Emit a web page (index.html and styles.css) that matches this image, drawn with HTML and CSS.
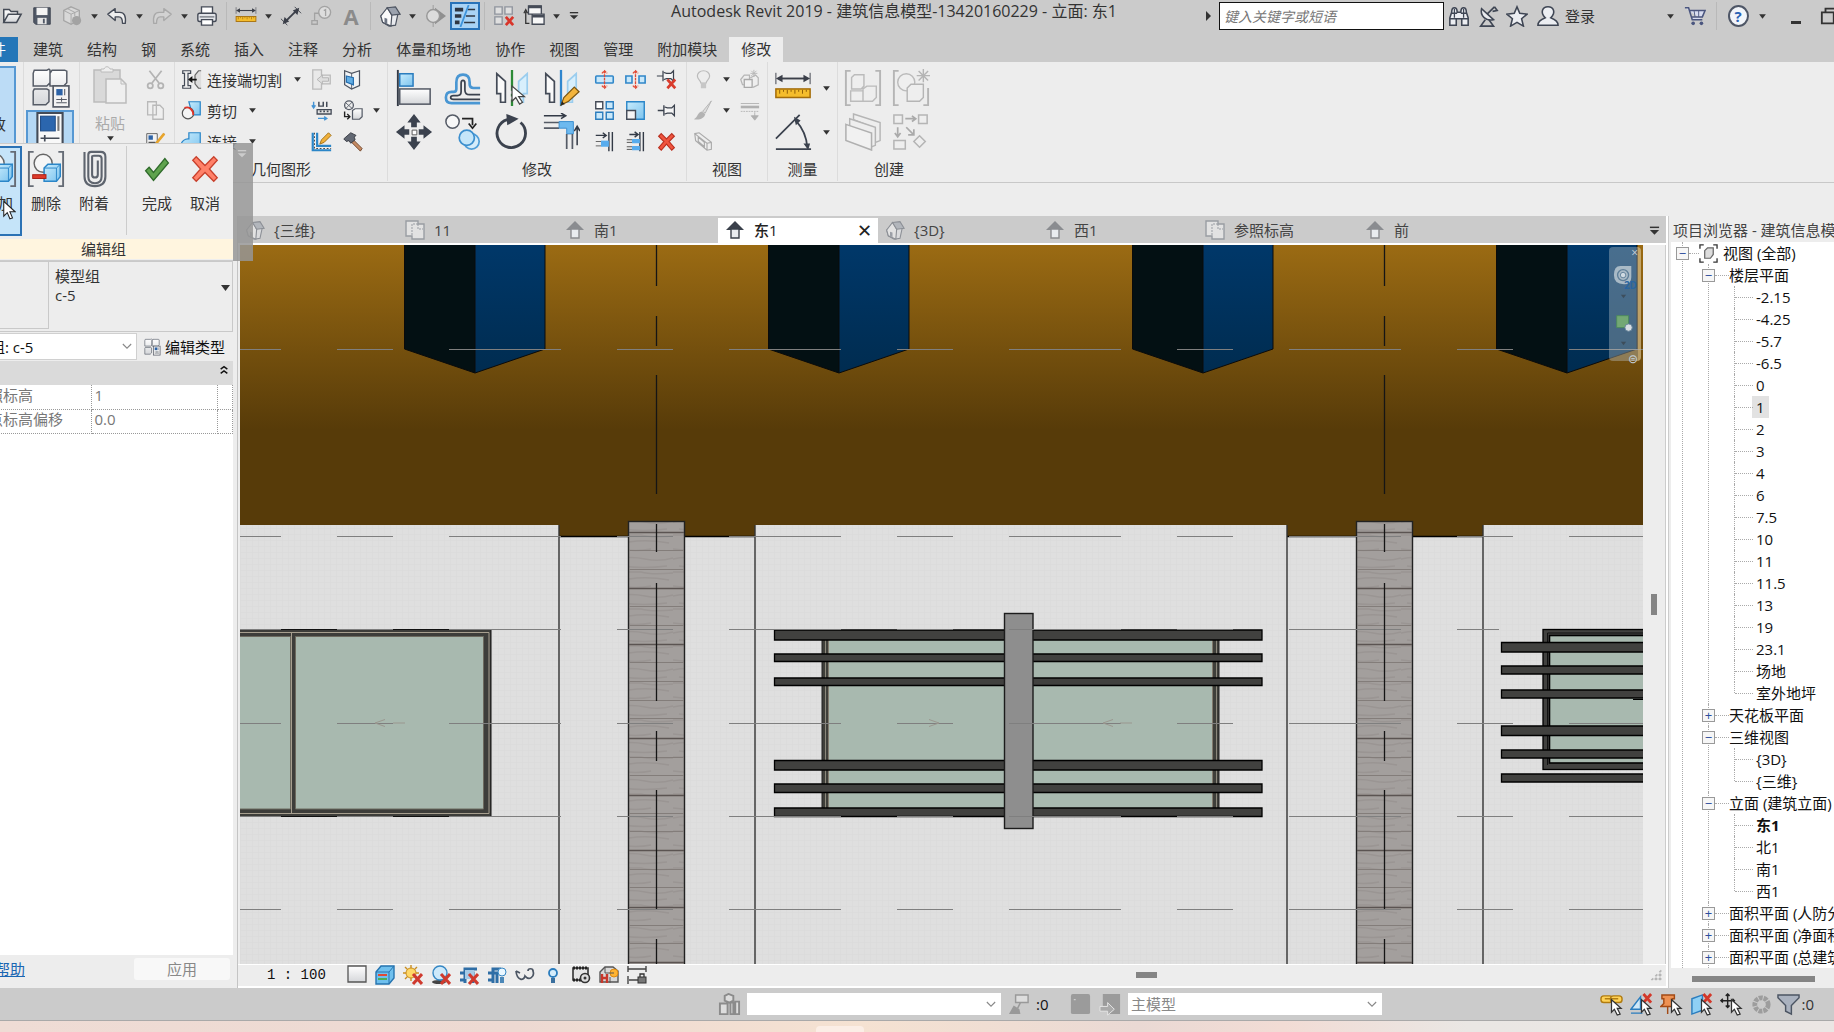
FILE: index.html
```html
<!DOCTYPE html>
<html lang="zh-CN">
<head>
<meta charset="utf-8">
<title>Autodesk Revit 2019</title>
<link rel="stylesheet" href="styles.css">
</head>
<body>
<svg class="sprite" aria-hidden="true">
  <defs>
    <linearGradient id="gBox" x1="0" y1="0" x2="0" y2="1"><stop offset="0" stop-color="#fff"/><stop offset="1" stop-color="#d5d7da"/></linearGradient>
    <linearGradient id="gBlue" x1="0" y1="0" x2="1" y2="1"><stop offset="0" stop-color="#c8ecfd"/><stop offset="1" stop-color="#7cc3ee"/></linearGradient>
  </defs>
  <symbol id="caret" viewBox="0 0 8 8"><path d="M1 2h6L4 6z" fill="#333"/></symbol>
  <symbol id="caret-right" viewBox="0 0 8 12"><path d="M1 1v10l5-5z" fill="#333"/></symbol>
  <symbol id="chev" viewBox="0 0 12 8"><path d="M1 1l5 5 5-5" fill="none" stroke="#888" stroke-width="1.3"/></symbol>
  <symbol id="fold" viewBox="0 0 10 12"><path d="M1 5l4-3 4 3M1 10l4-3 4 3" fill="none" stroke="#111" stroke-width="1.700"/></symbol>
  <symbol id="menu-caret" viewBox="0 0 12 12"><path d="M1 2h10" stroke="#333" stroke-width="1.6"/><path d="M1 5h10l-5 5z" fill="#333"/></symbol>
  <symbol id="open" viewBox="0 0 24 24"><path d="M3 19V5h6l2 2h7v3M3 19L8 10h14l-5 9z" fill="url(#gBox)" stroke="#444a55" stroke-width="1.6"/></symbol>
  <symbol id="save" viewBox="0 0 24 24"><path d="M3 3h18v18H5l-2-2z" fill="#505866" stroke="#3c434f"/><path d="M6 3h12v8H6z" fill="#f4f4f4"/><path d="M7 14h10v7H7z" fill="#e5e5e5"/><path d="M13 15h2v5h-2z" fill="#505866"/></symbol>
  <symbol id="sync" viewBox="0 0 24 24"><path d="M11 2l9 4v10l-9 5-8-4V6z" fill="#d8d8d8" stroke="#a5a5a5" stroke-width="1.4"/><path d="M3 6l8 4 9-4M11 10v11M7 4l8 4v4" fill="none" stroke="#a5a5a5"/><circle cx="17" cy="17" r="5" fill="#a3a3a3"/></symbol>
  <symbol id="undo" viewBox="0 0 24 24"><path d="M2 10l8-6v4h5c5 0 7 4 6 12h-3c0-5-1-7-4-7h-4v4z" fill="#eee" stroke="#454b57" stroke-width="1.5" stroke-linejoin="round"/></symbol>
  <symbol id="redo" viewBox="0 0 24 24"><path d="M22 10l-8-6v4H9c-5 0-7 4-6 12h3c0-5 1-7 4-7h4v4z" fill="#d2d2d2" stroke="#a9a9a9" stroke-width="1.5" stroke-linejoin="round"/></symbol>
  <symbol id="print" viewBox="0 0 24 24"><path d="M6 9V2h12v7" fill="#fff" stroke="#454b57" stroke-width="1.5"/><rect x="2" y="9" width="20" height="9" rx="2" fill="#e2e4e8" stroke="#454b57" stroke-width="1.5"/><path d="M6 16h12v6H6z" fill="#fff" stroke="#454b57" stroke-width="1.5"/><path d="M4 13h16" stroke="#454b57"/></symbol>
  <symbol id="measure" viewBox="0 0 40 40"><path d="M5 10h30" stroke="#3b3f49" stroke-width="2"/><path d="M2 10l7-4v8zM38 10l-7-4v8z" fill="#3b3f49"/><path d="M2 4v12M38 4v12" stroke="#3b3f49"/><rect x="2" y="21" width="36" height="9" fill="#f5bd2c" stroke="#a46d0a" stroke-width="1.6"/><path d="M6 22v4M10 22v2M14 22v4M18 22v2M22 22v4M26 22v2M30 22v4M34 22v2" stroke="#8a5b06"/></symbol>
  <symbol id="dim" viewBox="0 0 24 24"><path d="M5 19L19 5" stroke="#3b3f49" stroke-width="2"/><path d="M3 21l2-8 5 5zM21 3l-2 8-5-5z" fill="#3b3f49"/><path d="M1 15l7 7M16 2l7 7" stroke="#3b3f49"/></symbol>
  <symbol id="tag" viewBox="0 0 24 24"><circle cx="16" cy="8" r="6.500" fill="#ddd" stroke="#a3a3a3" stroke-width="1.5"/><path d="M15 6l2-1v7M10 9H5v8M2 17h6v4H2z" fill="none" stroke="#a3a3a3" stroke-width="1.4"/></symbol>
  <symbol id="home" viewBox="0 0 24 24"><path d="M2 12l7-8 12 4-3 14-7 1-7-4z" fill="#e9ebef" stroke="#4d5461" stroke-width="1.3"/><path d="M2 12l7-9 5 8-1 12-9-4z" fill="#fafafa" stroke="#4d5461" stroke-width="1.3"/><path d="M9 3l9-1 5 8-9 1z" fill="#9ba2ae" stroke="#4d5461" stroke-width="1.3"/><path d="M6 14l3 1v6l-3-2z" fill="#6d7583"/></symbol>
  <symbol id="section" viewBox="0 0 24 24"><path d="M12 3l12 9-12 9z" fill="#8f8f8f"/><circle cx="10" cy="12" r="7" fill="#dcdcdc" stroke="#999" stroke-width="1.600"/><path d="M10 0v5M10 19v5" stroke="#999"/></symbol>
  <symbol id="thin" viewBox="0 0 24 24"><path d="M1 3h9v4H1zM1 10h7v4H1zM1 17h5v4H1z" fill="#2f3642"/><path d="M15 5h8M13 12h10M11 19h12" stroke="#2f3642" stroke-width="1.6"/><path d="M16 0L7 24" stroke="#3e94dc" stroke-width="2"/></symbol>
  <symbol id="closehid" viewBox="0 0 24 24"><path d="M2 2h8v8H2zM13 2h8v8h-8zM2 13h8v8H2z" fill="#dfdfdf" stroke="#8f949d" stroke-width="1.5"/><path d="M14 13l8 9M22 13l-8 9" stroke="#d8352a" stroke-width="3"/></symbol>
  <symbol id="switch" viewBox="0 0 24 24"><path d="M6 1h14v9H6zM10 10h13v11H10z" fill="#f7f7f7" stroke="#454b57" stroke-width="1.5"/><path d="M6 2h14M10 12h13" stroke="#454b57" stroke-width="3"/><path d="M3 7v13h4M1 9l2-4 2 4" fill="none" stroke="#333" stroke-width="1.4"/></symbol>
  <symbol id="binoc" viewBox="0 0 24 24"><path d="M4 8q0-5 3-5t3 5h4q0-5 3-5t3 5l2 6v8h-7v-7h-6v7H2v-8z" fill="#eceef2" stroke="#3f4654" stroke-width="1.700"/><path d="M4 9h6M14 9h6M2 15h7M15 15h7M7 4v10M17 4v10" stroke="#3f4654" stroke-width="1.400"/></symbol>
  <symbol id="dish" viewBox="0 0 24 24"><path d="M5 4c-2 8 5 14 13 12z" fill="#e9ebef" stroke="#3f4654" stroke-width="1.700"/><path d="M11 10l8-8M19 2l3 4-5 1M9 16l-5 7h14l-5-7" fill="none" stroke="#3f4654" stroke-width="1.8"/></symbol>
  <symbol id="star" viewBox="0 0 24 24"><path d="M12 2l3 7 8 1-6 5 2 8-7-4-7 4 2-8-6-5 8-1z" fill="#eceef2" stroke="#3f4654" stroke-width="1.7"/></symbol>
  <symbol id="user" viewBox="0 0 24 24"><path d="M9 14c-6-6-3-12 3-12s9 6 3 12c5 2 8 4 8 8H1c0-4 3-6 8-8z" fill="#eceef2" stroke="#3f4654" stroke-width="1.7"/></symbol>
  <symbol id="cart" viewBox="0 0 24 24"><path d="M1 3h4l4 13h11M6 6h17l-3 7H8" fill="#d7dcf0" stroke="#4b567f" stroke-width="1.700"/><path d="M11 6l1 7M16 6v7" stroke="#4b567f"/><circle cx="10" cy="20" r="2" fill="#4b567f"/><circle cx="19" cy="20" r="2" fill="#4b567f"/></symbol>
  <symbol id="restore" viewBox="0 0 24 24"><path d="M2 8h13v12H2z" fill="none" stroke="#333" stroke-width="2"/><path d="M6 8V4h13v12h-4" fill="none" stroke="#333" stroke-width="2"/></symbol>

  <symbol id="props" viewBox="0 0 40 40"><g fill="url(#gBox)" stroke="#555b66" stroke-width="1.4"><path d="M5 3h12l2-1 1 1v12l-3 3H4V6zM22 3h12l2 1v11l-3 3H20V6zM5 21h12l2 1v11l-3 3H4V23z"/></g><rect x="23" y="18" width="15" height="20" fill="#f3f3f3" stroke="#555b66" stroke-width="1.600"/><path d="M26 21h6v6h-6z" fill="#2d63a7"/><path d="M34 21v6M26 31h10M26 34h10M31 29v4" stroke="#555b66"/></symbol>
  <symbol id="palette" viewBox="0 0 40 40"><path d="M8 1h24v38H8z" fill="#f8f8f8" stroke="#444b57" stroke-width="2"/><rect x="11" y="4" width="14" height="14" fill="#2b66ae" stroke="#1f4c86"/><path d="M28 4v14" stroke="#777" stroke-width="2"/><path d="M11 25h18M15 22v6M11 33h18M24 30v6" stroke="#444b57" stroke-width="1.600"/></symbol>
  <symbol id="paste" viewBox="0 0 40 40"><path d="M4 4h26v32H4z" fill="#d9d9d9" stroke="#bcbcbc" stroke-width="1.5"/><path d="M11 6V3h3c1-3 5-3 6 0h3v3z" fill="#eee" stroke="#bcbcbc"/><path d="M16 13h15l5 5v19H16z" fill="#efefef" stroke="#bcbcbc" stroke-width="1.500"/><path d="M31 13v5h5" fill="none" stroke="#bcbcbc"/></symbol>
  <symbol id="cut" viewBox="0 0 24 24"><g fill="none" stroke="#b4b4b4" stroke-width="2"><path d="M5 2l11 14M19 2L8 16"/><circle cx="6" cy="19" r="3"/><circle cx="18" cy="19" r="3"/></g></symbol>
  <symbol id="copydoc" viewBox="0 0 24 24"><path d="M3 2h10v15H3zM9 6h8l4 4v12H9z" fill="#efefef" stroke="#b9b9b9" stroke-width="1.500"/></symbol>
  <symbol id="match" viewBox="0 0 24 24"><path d="M2 3h12v14H2z" fill="#f3f3f3" stroke="#555"/><path d="M4 5h5v5H4z" fill="#2d63a7"/><path d="M4 13h8M22 3L11 16l-6 7" stroke="#555" stroke-width="1.500"/><path d="M22 3L13 14" stroke="#e9a52b" stroke-width="3"/></symbol>
  <symbol id="cope" viewBox="0 0 24 24"><path d="M2 2h9v3H8v14h3v3H2v-3h2V5H2z" fill="#f1f1f1" stroke="#444b57" stroke-width="1.400"/><path d="M23 2h-3l-4 5v10l4 5h3" fill="#ddd" stroke="#666" stroke-width="1.4"/><path d="M8 12l5-4v3h5v2h-5v3z" fill="#111"/></symbol>
  <symbol id="cutgeo" viewBox="0 0 24 24"><path d="M9 2h13v15H13z" fill="url(#gBlue)" stroke="#2b86c8" stroke-width="1.400"/><circle cx="8" cy="15" r="6.500" fill="#f5f5f5" stroke="#555" stroke-width="1.400"/><path d="M4 9c5-2 10 2 10 8" fill="none" stroke="#e0342a" stroke-width="2"/></symbol>
  <symbol id="join" viewBox="0 0 24 24"><path d="M9 2h13v15h-6a8 8 0 1 1-7-8z" fill="url(#gBlue)" stroke="#2b86c8" stroke-width="1.400"/></symbol>
  <symbol id="wallj" viewBox="0 0 24 24"><path d="M2 1h10v6h10v10H12v6H2z" fill="#e9e9e9" stroke="#bbb" stroke-width="1.500"/><path d="M7 12l6-5v3h7v4h-7v3z" fill="#dedede" stroke="#b0b0b0"/></symbol>
  <symbol id="beam" viewBox="0 0 24 24"><path d="M3 2v6M1 6l2 3 2-3M8 21h10M15 19l3 2-3 2" stroke="#4493d4" stroke-width="1.600" fill="none"/><path d="M9 2v5h5V2M18 2v6" fill="none" stroke="#444b57" stroke-width="1.700"/><path d="M7 11h16v5H7z" fill="#e4e4e4" stroke="#444b57" stroke-width="1.500"/><path d="M10 13h2M14 13h2M18 13h2" stroke="#444b57" stroke-width="2"/></symbol>
  <symbol id="demo" viewBox="0 0 24 24"><path d="M3 2l8 3 9-3v17l-9 4-8-5z" fill="#f1f3f5" stroke="#4d5461" stroke-width="1.400"/><path d="M11 5v18M20 2v17" stroke="#4d5461"/><path d="M5 8l8 2v8l-8-3z" fill="#62aee5" stroke="#266eaf" stroke-width="1.400"/></symbol>
  <symbol id="split" viewBox="0 0 24 24"><circle cx="8" cy="6" r="5" fill="none" stroke="#555b66" stroke-width="1.500"/><path d="M4 3l8 7M12 2l-8 8" stroke="#555b66"/><path d="M12 12l3-2h8v9l-3 3h-8z" fill="url(#gBox)" stroke="#555b66" stroke-width="1.400"/><path d="M3 13v6h5M6 16l3 3-3 3" fill="none" stroke="#222" stroke-width="1.600"/></symbol>
  <symbol id="join2" viewBox="0 0 24 24"><path d="M2 2v20h21M7 2v15h16" fill="none" stroke="#2b86c8" stroke-width="2.500"/><path d="M4 2v18h19" fill="none" stroke="#333" stroke-dasharray="2 2"/><path d="M10 15l2-5 8-8 3 3-8 8z" fill="#f0b03a" stroke="#9a6b15"/></symbol>
  <symbol id="hammer" viewBox="0 0 24 24"><path d="M12 9l11 11-2 3L10 12z" fill="#c48a62" stroke="#6b4127"/><path d="M2 9l8-7 6 3-2 2 1 3-5 4-2-3-3 1z" fill="#626873" stroke="#30343c"/></symbol>

  <symbol id="align" viewBox="0 0 40 40"><path d="M3 1v38" stroke="#333a46" stroke-width="2"/><rect x="5" y="5" width="14" height="13" fill="url(#gBlue)" stroke="#2b7dbe" stroke-width="1.6"/><rect x="5" y="21" width="32" height="16" fill="url(#gBox)" stroke="#555b66" stroke-width="1.600"/></symbol>
  <symbol id="offset" viewBox="0 0 40 40"><path d="M38 36H8q-6 0-6-6t6-6h2q3 0 3-3v-7q0-8 7-8t7 8v2q0 4 4 4h7" fill="none" stroke="#4a97d3" stroke-width="2.800"/><path d="M38 32H10q-3 0-3-2t3-2h4q4 0 4-4v-9q0-3 2-3t2 3v7q0 5 5 5h11" fill="none" stroke="#3b424e" stroke-width="1.800"/></symbol>
  <symbol id="mirror1" viewBox="0 0 40 40"><path d="M4 5l9 8v22H8v-9H4z" fill="#fafafa" stroke="#444b57" stroke-width="1.800"/><path d="M36 5l-9 8v22h5v-9h4z" fill="#d8effc" stroke="#9bcdee" stroke-width="1.800"/><path d="M20 1v38" stroke="#2c8a36" stroke-width="2.400" stroke-dasharray="22 3 3 3"/><path d="M20 18v16l4-4 4 7 3-2-4-6h6z" fill="#fff" stroke="#444" stroke-width="1.300"/></symbol>
  <symbol id="mirror2" viewBox="0 0 40 40"><path d="M4 5l9 8v22H8v-9H4z" fill="#fafafa" stroke="#444b57" stroke-width="1.800"/><path d="M36 5l-9 8v22h5v-9h4z" fill="#d8effc" stroke="#9bcdee" stroke-width="1.800"/><path d="M20 1v38" stroke="#2f86ce" stroke-width="2.400"/><path d="M20 38l3-8 11-11 5 5-11 10z" fill="#f3b43c" stroke="#7b5512" stroke-width="1.300"/><path d="M20 38l1-4 3 3z" fill="#222"/></symbol>
  <symbol id="move" viewBox="0 0 40 40"><g fill="#3b424e"><path d="M20 1l7 9h-4v5h-6v-5h-4zM20 39l7-9h-4v-5h-6v5h-4zM1 20l9-7v4h5v6h-5v4zM39 20l-9-7v4h-5v6h5v4z"/></g><path d="M18 18h5v5h-5z" fill="#fff" stroke="#555"/></symbol>
  <symbol id="copy" viewBox="0 0 40 40"><circle cx="9" cy="9" r="7" fill="#f7f7f7" stroke="#555b66" stroke-width="1.600"/><path d="M19 6h11v7M26 11l4 5 4-5" fill="none" stroke="#222" stroke-width="1.800"/><circle cx="29" cy="30" r="8" fill="#d5edfb" stroke="#4f9ed8" stroke-width="1.800"/><circle cx="24" cy="26" r="8" fill="#c5e6f9" stroke="#3c8fce" stroke-width="1.800"/></symbol>
  <symbol id="rotate" viewBox="0 0 40 40"><path d="M29 10a15 15 0 1 1-14-3" fill="none" stroke="#3b424e" stroke-width="3"/><path d="M14 1l13 5-12 7z" fill="#3b424e"/></symbol>
  <symbol id="trim" viewBox="0 0 40 40"><path d="M2 3h22M20 0l5 3-5 3M37 34V15M34 19l3-5 3 5" fill="none" stroke="#333a46" stroke-width="1.600"/><path d="M2 10h16M2 16h16" stroke="#555b66" stroke-width="1.800"/><path d="M18 9h15v13h-7v-6h-8z" fill="#6db9ef" stroke="#3a8dcf"/><path d="M26 22v16M32 22v16" stroke="#555b66" stroke-width="1.800"/></symbol>
  <symbol id="spl1" viewBox="0 0 24 24"><rect x="2" y="8" width="20" height="8" rx="1" fill="#c9e8fa" stroke="#3187c9" stroke-width="1.800"/><path d="M12 2v20M9 5l3-3 3 3M9 19l3 3 3-3" fill="none" stroke="#e24a35" stroke-width="1.500" stroke-dasharray="3 1"/></symbol>
  <symbol id="spl2" viewBox="0 0 24 24"><path d="M1 8h7v8H1zM16 8h7v8h-7z" fill="#c9e8fa" stroke="#3187c9" stroke-width="1.800"/><path d="M12 2v20M9 5l3-3 3 3M9 19l3 3 3-3" fill="none" stroke="#e24a35" stroke-width="1.500" stroke-dasharray="3 1"/></symbol>
  <symbol id="pin" viewBox="0 0 24 24"><path d="M2 12h7M9 6v12M10 8l3 1h5l3-3v12l-3-3h-5l-3 1" fill="#f5f5f5" stroke="#3b424e" stroke-width="1.500"/></symbol>
  <symbol id="unpin" viewBox="0 0 24 24"><path d="M1 8h7M8 2v12M9 4l3 1h5l3-3v12l-3-3h-5l-3 1" fill="#f5f5f5" stroke="#3b424e" stroke-width="1.400"/><path d="M13 12l9 10M22 12l-9 10" stroke="#d93c2d" stroke-width="3"/></symbol>
  <symbol id="array" viewBox="0 0 24 24"><g stroke-width="1.600"><path d="M2 2h8v8H2z" fill="#fff" stroke="#444b57"/><path d="M14 2h8v8h-8zM2 14h8v8H2zM14 14h8v8h-8z" fill="#c9e8fa" stroke="#2b7dbe"/></g></symbol>
  <symbol id="scale" viewBox="0 0 24 24"><path d="M2 2h20v20H2z" fill="url(#gBlue)" stroke="#2b86c8" stroke-width="1.600"/><path d="M2 12h10v10H2z" fill="#f5f5f5" stroke="#444b57" stroke-width="1.600"/></symbol>
  <symbol id="ext1" viewBox="0 0 24 24"><path d="M2 5h11M10 2l4 3-4 3M17 1v22M21 1v22" fill="none" stroke="#333a46" stroke-width="1.600"/><path d="M2 12h6M2 17h6" stroke="#555"/><path d="M8 11h9v7H8z" fill="#57acee"/></symbol>
  <symbol id="ext2" viewBox="0 0 24 24"><path d="M5 4h9M11 1l4 3-4 3M17 1v22M21 1v22" fill="none" stroke="#333a46" stroke-width="1.600"/><path d="M2 10h6M2 13h6M2 18h6M2 21h6" stroke="#444"/><path d="M8 9h9v5H8zM8 17h9v5H8z" fill="#57acee"/></symbol>
  <symbol id="del" viewBox="0 0 24 24"><path d="M6 3l6 6 6-6 3 3-6 6 6 7-3 3-6-7-6 7-3-3 6-7-6-6z" fill="#f0553f" stroke="#ba2f1f" stroke-width="1.300"/></symbol>
  <symbol id="bulb" viewBox="0 0 24 24"><path d="M9 16c0-3-4-4-4-8a7 6 0 0 1 14 0c0 4-4 5-4 8z" fill="#ededed" stroke="#bbb" stroke-width="1.400"/><path d="M9 16h6v6H9z" fill="#c7c7c7"/></symbol>
  <symbol id="cubes" viewBox="0 0 24 24"><path d="M2 12l4-5h6v11H4zM13 10l6-3 3 3v8l-6 3" fill="#eee" stroke="#b5b5b5" stroke-width="1.400"/><path d="M6 12h9v9H6z" fill="#f2f2f2" stroke="#a9a9a9" stroke-width="1.500"/><path d="M17 1v8M13 5h8M14 2l6 6M20 2l-6 6" stroke="#b5b5b5"/></symbol>
  <symbol id="brush" viewBox="0 0 24 24"><path d="M21 1L11 13l3 2z" fill="#ddd" stroke="#b0b0b0"/><path d="M10 13c-5 1-4 6-9 9 7 1 12-1 13-6z" fill="#b3b3b3"/></symbol>
  <symbol id="linew" viewBox="0 0 24 24"><path d="M2 4h21" stroke="#b0b0b0"/><path d="M2 8h21" stroke="#b0b0b0" stroke-width="3"/><path d="M2 13h21" stroke="#b0b0b0" stroke-dasharray="2 1"/><path d="M18 14v6M14 18l4 5 4-5z" fill="#b0b0b0" stroke="#b0b0b0"/></symbol>
  <symbol id="slab" viewBox="0 0 24 24"><path d="M2 3l5-1 14 11v8l-5 1L3 11zM2 3l14 11v8M16 14l5-1M6 7l7 6v5L6 12z" fill="#eee" stroke="#aaa" stroke-width="1.300"/></symbol>
  <symbol id="angle" viewBox="0 0 40 40"><path d="M2 38h37M2 27L27 2" stroke="#3b424e" stroke-width="1.800"/><path d="M23 8q11 12 12 28" fill="none" stroke="#3b424e" stroke-width="1.800"/><path d="M21 4l7 4-5 5zM31 32h7l-2 7z" fill="#3b424e"/></symbol>
  <symbol id="group1" viewBox="0 0 40 40"><path d="M7 2H2v36h5M33 2h5v36h-5" fill="none" stroke="#b5b5b5" stroke-width="2"/><path d="M8 9l3-3h10v12l-3 3H8zM7 23h13v11H7zM20 21l4-3h10v12l-4 4H20z" fill="#eee" stroke="#bbb" stroke-width="1.500"/></symbol>
  <symbol id="group2" viewBox="0 0 40 40"><path d="M7 2H2v36h5M33 38h5V20" fill="none" stroke="#b5b5b5" stroke-width="2"/><circle cx="15" cy="14" r="9" fill="#efefef" stroke="#bbb" stroke-width="1.500"/><path d="M16 20l4-4h13v14l-4 4H16z" fill="#eee" stroke="#b5b5b5" stroke-width="1.500"/><path d="M33 0v14M26 7h14M28 2l10 10M38 2L28 12" stroke="#b5b5b5" stroke-width="1.500"/></symbol>
  <symbol id="parts" viewBox="0 0 40 40"><path d="M10 1l28 9v19l-5 2V16L10 7z" fill="#eee" stroke="#b5b5b5" stroke-width="1.500"/><path d="M6 6l27 9v19l-5 2-22-9z" fill="#eee" stroke="#b5b5b5" stroke-width="1.500"/><path d="M2 12l27 9v18L2 29z" fill="#f1f1f1" stroke="#b0b0b0" stroke-width="1.600"/></symbol>
  <symbol id="assem" viewBox="0 0 40 40"><path d="M2 2h9v9H2zM28 2h9v9h-9zM2 29h12v9H2zM29 24l6 6-6 6-6-6z" fill="#eee" stroke="#b5b5b5" stroke-width="1.600"/><path d="M14 6h10M21 3l4 3-4 3M6 15v9M3 21l3 4 3-4M15 15l8 8M23 17v6h-6" fill="none" stroke="#aaa" stroke-width="1.800"/></symbol>

  <symbol id="g-del" viewBox="0 0 40 40"><path d="M7 2H2v36h5M33 2h5v36h-5" fill="none" stroke="#666c76" stroke-width="2"/><circle cx="17" cy="14" r="9.500" fill="#f6f6f6" stroke="#666" stroke-width="1.500"/><path d="M18 19l4-4h13v13l-4 5H18z" fill="url(#gBlue)" stroke="#2b86c8" stroke-width="1.600"/><path d="M18 19h13v14M31 19l4-4" fill="none" stroke="#2b86c8"/><rect x="6" y="26" width="14" height="4" fill="#de3a2a" stroke="#a81f14"/></symbol>
  <symbol id="clip" viewBox="0 0 40 40"><path d="M24 11v15q0 3-3 3t-3-3V7q0-1 2-1h5q3 0 3 3v19q0 7-7 7t-7-7V5q0-3 3-3h10q5 0 5 5v21q0 10-11 10t-11-10V2" fill="none" stroke="#5e646e" stroke-width="2.200"/></symbol>
  <symbol id="ok" viewBox="0 0 32 32"><path d="M3 18l4-4 5 6L25 4l4 5-17 20z" fill="#5fa34e" stroke="#2f6b2b" stroke-width="1.500"/></symbol>
  <symbol id="no" viewBox="0 0 32 32"><path d="M6 2l10 10L26 2l4 4-9 10 9 10-4 4-10-10L6 30l-4-4 9-10L2 6z" fill="#ff8169" stroke="#c8402c" stroke-width="1.500"/></symbol>
  <symbol id="elev" viewBox="0 0 20 20"><path d="M10 1l9 9H1z" fill="currentColor"/><path d="M6 9h8v9H6z" fill="#e9ecf0" stroke="currentColor" stroke-width="1.400"/></symbol>
  <symbol id="plan" viewBox="0 0 20 20"><path d="M1 1h12v3h6v15H7v-3H1z" fill="#e2e2e2" stroke="#999da3" stroke-width="1.400"/><path d="M13 4H7v12M13 4v5h5" fill="none" stroke="#999da3" stroke-dasharray="2 1"/></symbol>
  <symbol id="vroot" viewBox="0 0 20 20"><path d="M1 5V1h4M15 1h4v4M19 15v4h-4M5 19H1v-4" fill="none" stroke="#333" stroke-width="1.400"/><path d="M6 7l3-3h6v7l-3 4H6z" fill="#ddd" stroke="#666" stroke-width="1.300"/></symbol>

  <symbol id="v1" viewBox="0 0 20 20"><path d="M1 1h18v16H1z" fill="url(#gBox)" stroke="#555" stroke-width="1.300"/></symbol>
  <symbol id="v2" viewBox="0 0 20 20"><path d="M1 7l5-6h13v12l-5 6H1z" fill="#6fc0ee" stroke="#2674b0" stroke-width="1.400"/><path d="M1 7h13v12M14 7l5-6" fill="none" stroke="#2674b0"/><path d="M3 10h9" stroke="#e04a35" stroke-width="2"/><path d="M3 14h9" stroke="#4cae58" stroke-width="2"/></symbol>
  <symbol id="redx" viewBox="0 0 20 20"><path d="M10 9l9 10M19 9l-9 10" stroke="#cf3a2e" stroke-width="3"/></symbol>
  <symbol id="v3" viewBox="0 0 20 20"><path d="M8 0v16M0 8h16M2 2l12 12M14 2L2 14" stroke="#c98e20" stroke-width="1.400"/><circle cx="8" cy="8" r="5" fill="#ffd866" stroke="#c98e20"/><use href="#redx"/></symbol>
  <symbol id="v4" viewBox="0 0 20 20"><ellipse cx="8" cy="17" rx="7" ry="2" fill="#444"/><circle cx="9" cy="8" r="7" fill="#cde9fa" stroke="#3587c4" stroke-width="1.400"/><use href="#redx"/></symbol>
  <symbol id="v5" viewBox="0 0 20 20"><path d="M6 18V4h12M1 8h13v10M1 15h5" fill="none" stroke="#2f6ea6" stroke-width="3"/><path d="M6 5h9v9H6z" fill="#a6cbe6"/><use href="#redx"/></symbol>
  <symbol id="v6" viewBox="0 0 20 20"><path d="M6 18V4h8M1 8h9v10M1 15h5" fill="none" stroke="#2f6ea6" stroke-width="3"/><circle cx="15" cy="7" r="4" fill="#eaf7ff" stroke="#3587c4"/><path d="M13 12h4v6h-4z" fill="#4c88b8"/></symbol>
  <symbol id="v7" viewBox="0 0 20 20"><path d="M1 6c1 10 8 10 9 5 4 5 10 1 8-5 0-3-5-3-5 0M1 6l4 2" fill="none" stroke="#4b5563" stroke-width="1.700"/></symbol>
  <symbol id="v8" viewBox="0 0 20 20"><circle cx="10" cy="8" r="4" fill="#d5edfb" stroke="#2b7dbe" stroke-width="1.800"/><path d="M8 13h4v5H8z" fill="#3a6f9e"/></symbol>
  <symbol id="v9" viewBox="0 0 20 20"><path d="M2 3h15v12H2z" fill="#e5e5e5" stroke="#333" stroke-width="1.600"/><path d="M2 3h15M2 15h8" stroke="#222" stroke-width="3" stroke-dasharray="2 1"/><circle cx="14" cy="13" r="4.500" fill="#ddd" stroke="#333" stroke-width="1.600"/><circle cx="14" cy="13" r="1.500" fill="#333"/></symbol>
  <symbol id="v10" viewBox="0 0 20 20"><path d="M1 7l5-5h8l5 4v11H1z" fill="#d8d8d8" stroke="#555" stroke-width="1.400"/><path d="M3 9v9M8 9v9M3 13h5" stroke="#c8382b" stroke-width="2.400"/><circle cx="15" cy="8" r="4" fill="#ffb432" stroke="#e08a10"/><path d="M11 12v6M6 2v6h9" stroke="#555" fill="none"/></symbol>
  <symbol id="v11" viewBox="0 0 20 20"><path d="M1 1v6M19 1v6M1 4h18M1 11v8M2 15h9" fill="none" stroke="#444" stroke-width="1.400"/><rect x="11" y="12" width="8" height="6" fill="#777" stroke="#333"/><path d="M13 12V9h4v3" fill="none" stroke="#333" stroke-width="1.300"/></symbol>

  <symbol id="s1" viewBox="0 0 24 24"><path d="M2 11h8v11H2zM13 10h3v12h-3zM18 9h4v13h-4zM7 3l4-2 5 2v5l-4 2-5-2z" fill="#ddd" stroke="#8b8b8b" stroke-width="2"/></symbol>
  <symbol id="s2" viewBox="0 0 24 24"><path d="M9 2h13v8H9zM14 10l-3 6" fill="#ddd" stroke="#999" stroke-width="1.500"/><path d="M2 22h12l-1-5-6-4z" fill="#999"/></symbol>
  <symbol id="s3" viewBox="0 0 24 24"><rect x="2" y="1" width="20" height="21" rx="2" fill="#9b9b9b"/><path d="M5 7h2" stroke="#ddd"/></symbol>
  <symbol id="s4" viewBox="0 0 24 24"><path d="M4 1h18v21H9v-8H4z" fill="#9b9b9b"/><path d="M1 14h8v-4l7 7-7 6v-4H1z" fill="#aaa" stroke="#e6e6e6"/></symbol>
  <symbol id="cur" viewBox="0 0 24 24"><path d="M12 7v13l3-3 3 6 3-1-3-6h4z" fill="#fff" stroke="#333" stroke-width="1.300"/></symbol>
  <symbol id="q1" viewBox="0 0 24 24"><rect x="1" y="3" width="12" height="7" rx="3" fill="#ffd257" stroke="#b17c10" stroke-width="1.500"/><rect x="11" y="3" width="12" height="7" rx="3" fill="#ffd257" stroke="#b17c10" stroke-width="1.500"/><path d="M5 6h14" stroke="#b17c10" stroke-width="1.500"/><use href="#cur"/></symbol>
  <symbol id="q2" viewBox="0 0 24 24"><path d="M1 17L11 4v13zM1 21h12" fill="#cfe9f9" stroke="#2b7dbe" stroke-width="1.500"/><path d="M14 1l8 9M22 1l-8 9" stroke="#d3382a" stroke-width="3"/><use href="#cur"/></symbol>
  <symbol id="q3" viewBox="0 0 24 24"><path d="M2 2h13v4h-2v5l3 3H1l3-3V6H2zM8 14v8" fill="#ee9152" stroke="#a34a15" stroke-width="1.500"/><use href="#cur"/></symbol>
  <symbol id="q4" viewBox="0 0 24 24"><path d="M2 6l11-4v16L2 22z" fill="#8fd0f5" stroke="#2b7dbe" stroke-width="1.500"/><path d="M14 1l8 9M22 1l-8 9" stroke="#d3382a" stroke-width="3"/><use href="#cur"/></symbol>
  <symbol id="q5" viewBox="0 0 24 24"><path d="M8 1v14M1 8h14M6 3l2-2 2 2M6 13l2 2 2-2M3 6L1 8l2 2M13 6l2 2-2 2" fill="none" stroke="#222" stroke-width="1.500"/><use href="#cur"/></symbol>
  <symbol id="q6" viewBox="0 0 24 24"><circle cx="12" cy="12" r="7" fill="none" stroke="#9d9d9d" stroke-width="5" stroke-dasharray="4 1"/></symbol>
  <symbol id="q7" viewBox="0 0 24 24"><path d="M1 2h22v3l-8 8v9l-6-3v-6L1 5z" fill="#aab2bf" stroke="#4c5563" stroke-width="1.500"/></symbol>
</svg>

<div class="app">
  <header class="titlebar">
    <div class="qat">
      <button class="tb" aria-label="打开"><svg><use href="#open"/></svg></button>
      <button class="tb" aria-label="保存"><svg><use href="#save"/></svg></button>
      <button class="tb" aria-label="同步"><svg><use href="#sync"/></svg></button><button class="tc" aria-label="同步选项"><svg><use href="#caret"/></svg></button>
      <button class="tb" aria-label="放弃"><svg><use href="#undo"/></svg></button><button class="tc" aria-label="放弃列表"><svg><use href="#caret"/></svg></button>
      <button class="tb" aria-label="重做"><svg><use href="#redo"/></svg></button><button class="tc" aria-label="重做列表"><svg><use href="#caret"/></svg></button>
      <button class="tb" aria-label="打印"><svg><use href="#print"/></svg></button>
      <i class="tsep"></i>
      <button class="tb" aria-label="测量"><svg><use href="#measure"/></svg></button><button class="tc" aria-label="测量选项"><svg><use href="#caret"/></svg></button>
      <button class="tb" aria-label="尺寸标注"><svg><use href="#dim"/></svg></button>
      <button class="tb" aria-label="标记"><svg><use href="#tag"/></svg></button>
      <button class="tb letter" aria-label="文字">A</button>
      <i class="tsep"></i>
      <button class="tb" aria-label="三维视图"><svg><use href="#home"/></svg></button><button class="tc" aria-label="三维视图选项"><svg><use href="#caret"/></svg></button>
      <button class="tb" aria-label="剖面"><svg><use href="#section"/></svg></button>
      <button class="tb on" aria-label="细线"><svg><use href="#thin"/></svg></button>
      <i class="tsep"></i>
      <button class="tb" aria-label="关闭非活动视图"><svg><use href="#closehid"/></svg></button>
      <button class="tb" aria-label="切换窗口"><svg><use href="#switch"/></svg></button><button class="tc" aria-label="窗口列表"><svg><use href="#caret"/></svg></button>
      <button class="tc wide" aria-label="自定义"><svg class="mc"><use href="#menu-caret"/></svg></button>
    </div>
    <h1 class="title">Autodesk Revit 2019 - 建筑信息模型-13420160229 - 立面: 东1</h1>
    <div class="infocenter">
      <svg class="mc"><use href="#caret-right"/></svg>
      <input class="search" type="text" placeholder="键入关键字或短语" aria-label="搜索">
      <button class="tb" aria-label="查找"><svg><use href="#binoc"/></svg></button>
      <button class="tb" aria-label="通信中心"><svg><use href="#dish"/></svg></button>
      <button class="tb" aria-label="收藏夹"><svg><use href="#star"/></svg></button>
      <button class="login"><svg><use href="#user"/></svg>登录</button>
      <button class="tc" aria-label="登录选项"><svg><use href="#caret"/></svg></button>
      <button class="tb cart" aria-label="应用商店"><svg><use href="#cart"/></svg></button>
      <i class="tsep"></i>
      <button class="tb help" aria-label="帮助"><span>?</span></button><button class="tc" aria-label="帮助选项"><svg><use href="#caret"/></svg></button>
      <button class="tb min" aria-label="最小化"><i></i></button>
      <button class="tb" aria-label="还原"><svg><use href="#restore"/></svg></button>
    </div>
  </header>

  <nav class="tabs">
    <a href="#" class="file">文件</a><a href="#">建筑</a><a href="#">结构</a><a href="#">钢</a><a href="#">系统</a><a href="#">插入</a><a href="#">注释</a><a href="#">分析</a><a href="#">体量和场地</a><a href="#">协作</a><a href="#">视图</a><a href="#">管理</a><a href="#">附加模块</a><a href="#" class="active">修改</a>
  </nav>

  <section class="ribbon">
    <div class="panel p-select"><button class="modify-btn">修改</button></div>
    <div class="panel p-props">
      <button class="lb" aria-label="类型属性"><svg><use href="#props"/></svg></button>
      <button class="lb on" aria-label="属性"><svg><use href="#palette"/></svg></button>
    </div>
    <div class="panel p-clip">
      <div class="body">
        <button class="paste"><svg class="l"><use href="#paste"/></svg>粘贴<svg class="c"><use href="#caret"/></svg></button>
        <div class="grid g1">
          <button aria-label="剪切到剪贴板"><svg><use href="#cut"/></svg></button>
          <button aria-label="复制到剪贴板"><svg><use href="#copydoc"/></svg></button>
          <button aria-label="匹配类型"><svg><use href="#match"/></svg></button>
        </div>
      </div>
    </div>
    <div class="panel p-geo">
      <div class="body">
        <div class="grid gt">
          <button><svg><use href="#cope"/></svg>连接端切割<svg class="c"><use href="#caret"/></svg></button>
          <button><svg><use href="#cutgeo"/></svg>剪切<svg class="c"><use href="#caret"/></svg></button>
          <button><svg><use href="#join"/></svg>连接<svg class="c"><use href="#caret"/></svg></button>
        </div>
        <div class="grid g2c">
          <button aria-label="墙连接"><svg><use href="#wallj"/></svg></button><button aria-label="拆除"><svg><use href="#demo"/></svg></button><i></i>
          <button aria-label="梁柱连接"><svg><use href="#beam"/></svg></button><button aria-label="拆分面"><svg><use href="#split"/></svg></button><svg class="c"><use href="#caret"/></svg>
          <button aria-label="墙连接编辑"><svg><use href="#join2"/></svg></button><button aria-label="拆除工具"><svg><use href="#hammer"/></svg></button><i></i>
        </div>
      </div>
      <div class="label">几何图形</div>
    </div>
    <div class="panel p-mod">
      <div class="body">
        <div class="big b4">
          <button aria-label="对齐"><svg><use href="#align"/></svg></button><button aria-label="偏移"><svg><use href="#offset"/></svg></button><button aria-label="镜像拾取轴"><svg><use href="#mirror1"/></svg></button><button aria-label="镜像绘制轴"><svg><use href="#mirror2"/></svg></button>
          <button aria-label="移动"><svg><use href="#move"/></svg></button><button aria-label="复制"><svg><use href="#copy"/></svg></button><button aria-label="旋转"><svg><use href="#rotate"/></svg></button><button aria-label="修剪"><svg><use href="#trim"/></svg></button>
        </div>
        <div class="grid g3">
          <button aria-label="拆分图元"><svg><use href="#spl1"/></svg></button><button aria-label="用间隙拆分"><svg><use href="#spl2"/></svg></button><button aria-label="解锁"><svg><use href="#unpin"/></svg></button>
          <button aria-label="阵列"><svg><use href="#array"/></svg></button><button aria-label="缩放"><svg><use href="#scale"/></svg></button><button aria-label="锁定"><svg><use href="#pin"/></svg></button>
          <button aria-label="延伸单个"><svg><use href="#ext1"/></svg></button><button aria-label="延伸多个"><svg><use href="#ext2"/></svg></button><button aria-label="删除"><svg><use href="#del"/></svg></button>
        </div>
      </div>
      <div class="label">修改</div>
    </div>
    <div class="panel p-view">
      <div class="grid gv">
        <button aria-label="隐藏"><svg><use href="#bulb"/></svg></button><svg class="c"><use href="#caret"/></svg><button aria-label="替换"><svg><use href="#cubes"/></svg></button>
        <button aria-label="刷子"><svg><use href="#brush"/></svg></button><svg class="c"><use href="#caret"/></svg><button aria-label="线处理"><svg><use href="#linew"/></svg></button>
        <button aria-label="剖切面"><svg><use href="#slab"/></svg></button>
      </div>
      <div class="label">视图</div>
    </div>
    <div class="panel p-meas">
      <div class="big bm">
        <button aria-label="测量距离"><svg><use href="#measure"/></svg></button><svg class="c"><use href="#caret"/></svg>
        <button aria-label="角度标注"><svg><use href="#angle"/></svg></button><svg class="c"><use href="#caret"/></svg>
      </div>
      <div class="label">测量</div>
    </div>
    <div class="panel p-new">
      <div class="big b2">
        <button aria-label="创建组"><svg><use href="#group1"/></svg></button><button aria-label="创建类似"><svg><use href="#group2"/></svg></button>
        <button aria-label="创建零件"><svg><use href="#parts"/></svg></button><button aria-label="创建部件"><svg><use href="#assem"/></svg></button>
      </div>
      <div class="label">创建</div>
    </div>
  </section>
  <div class="options"></div>

  <main class="main">
    <aside class="properties">
      <div class="inner">
        <div class="type">
          <div class="preview"></div>
          <div class="tname">模型组<br>c-5</div>
          <svg><use href="#caret"/></svg>
        </div>
        <div class="filter">
          <label class="combo"><select aria-label="图元筛选"><option>模型组: c-5</option></select><svg><use href="#chev"/></svg></label>
          <button class="edit-type"><svg><use href="#props"/></svg>编辑类型</button>
        </div>
        <div class="cat"><svg><use href="#fold"/></svg></div>
        <table class="ptable">
          <tr><th scope="row">参照标高</th><td>1</td><td></td></tr>
          <tr><th scope="row">原点标高偏移</th><td>0.0</td><td></td></tr>
        </table>
        <div class="blank"></div>
        <div class="pfoot"><a href="#">属性帮助</a><button disabled>应用</button></div>
      </div>
    </aside>

    <section class="center">
      <div class="doctabs">
        <a href="#"><svg class="dim"><use href="#home"/></svg>{三维}</a>
        <a href="#"><svg><use href="#plan"/></svg>11</a>
        <a href="#"><svg><use href="#elev"/></svg>南1</a>
        <a href="#" class="active"><svg><use href="#elev"/></svg>东1<span class="x">✕</span></a>
        <a href="#"><svg class="dim"><use href="#home"/></svg>{3D}</a>
        <a href="#"><svg><use href="#elev"/></svg>西1</a>
        <a href="#"><svg><use href="#plan"/></svg>参照标高</a>
        <a href="#"><svg><use href="#elev"/></svg>前</a>
        <button class="more" aria-label="更多视图"><svg><use href="#menu-caret"/></svg></button>
      </div>
      <div class="stage">
        <div class="canvas">
          <svg class="drawing" viewBox="240 245 1403 719" preserveAspectRatio="xMinYMin slice">
            <defs>
              <linearGradient id="brown" x1="0" y1="245" x2="0" y2="430" gradientUnits="userSpaceOnUse"><stop offset="0" stop-color="#9b6b13"/><stop offset=".5" stop-color="#79530e"/><stop offset="1" stop-color="#573b09"/></linearGradient>
              <linearGradient id="navy" x1="0" y1="0" x2="0" y2="1"><stop offset="0" stop-color="#00386a"/><stop offset="1" stop-color="#002c50"/></linearGradient>
              <pattern id="tile" width="6" height="6" patternUnits="userSpaceOnUse"><rect width="6" height="6" fill="#dfdfdf"/><path d="M0 0H6M0 0V6" stroke="#dadada"/></pattern>
              <pattern id="wood" width="56" height="37" patternUnits="userSpaceOnUse" x="1"><rect width="56" height="37" fill="#a39f9d"/><path d="M0 4q14-3 28 0t28-1M6 11q20 3 44 0M0 17h24q10 3 32 1M12 24q18-3 40 1M0 31q20 3 34 0" stroke="#9a9593" stroke-width="1.500" fill="none"/></pattern>
              <g id="prism"><path d="M404.500 240h70.500v133l-70.500-24z" fill="#031013"/><path d="M475 240h70v109L475 373z" fill="url(#navy)"/><path d="M404.500 240v109L475 373l70-24V240M475 240v133" fill="none" stroke="#0a0a0a"/></g>
              <g id="pillar"><rect x="628.500" y="521.500" width="56" height="450" fill="url(#wood)" stroke="#222" stroke-width="1.400"/><path d="M629 532.500h55M629 588.500h55M629 644.500h55M629 738.500h55M629 795.500h55M629 850.500h55M629 907.500h55M629 962.500h55" stroke="#5b5452" stroke-width="1.400"/><path d="M629 550.500h55M629 569.500h55M629 606.500h55M629 625.500h55M629 662.500h55M629 681.500h55M629 700.500h55M629 718.500h55M629 757.500h55M629 775.500h55M629 813.500h55M629 831.500h55M629 869.500h55M629 887.500h55M629 925.500h55M629 943.500h55" stroke="#837d7a"/></g>
              <g id="axis" stroke="#151515" stroke-width="1.300"><path d="M656.500 245v41M656.500 316v30M656.500 375v119M656.500 524v28M656.500 583v118M656.500 731v30M656.500 790v119M656.500 939v30"/></g>
            </defs>
            <rect x="240" y="240" width="1600" height="300" fill="url(#brown)"/>
            <use href="#prism"/><use href="#prism" x="364"/><use href="#prism" x="728"/><use href="#prism" x="1092"/>
            <path d="M240 525h319v11.500h196V525h532v11.500h196V525h400v500H240z" fill="url(#tile)"/>
            <path d="M559 536.500h196M1287 536.500h196" stroke="#000" stroke-width="1.400"/>
            <path d="M559 525v445M755 525v445M1287 525v445M1483 525v445" stroke="#333" stroke-width="1.400"/>
            <use href="#pillar"/><use href="#pillar" x="728"/>
            <g>
              <rect x="230" y="629.500" width="261" height="187" fill="#3d3d3a" stroke="#111"/>
              <path d="M230 632.500h259v181H230M291.500 632v181" fill="none" stroke="#a79f8f"/>
              <path d="M230 636.500h60.500V809H230zM295.500 636.500h188V809h-188z" fill="#a8b9af" stroke="#6d6a5f"/>
            </g>
            <g>
              <rect x="822" y="633" width="397" height="180" fill="#3f3f3a" stroke="#222"/>
              <path d="M825.500 634v178M1216.500 634v178" stroke="#8b887c"/>
              <rect x="828.500" y="634" width="384" height="178" fill="#a8b9af" stroke="#817a6d"/>
              <g fill="#41413f" stroke="#000" stroke-width="1.300"><path d="M774.500 630h487.500v10h-487.500zM774.500 654h487.500v7.500h-487.500zM774.500 678h487.500v7.500h-487.500zM774.500 760.500h487.500v9.500h-487.500zM774.500 784h487.500v8.500h-487.500zM774.500 808h487.500v8.500h-487.500z"/></g>
              <rect x="1004.500" y="613.500" width="28.500" height="215" fill="#8e8e8e" stroke="#1c1c1c" stroke-width="1.400"/>
            </g>
            <g>
              <rect x="1543" y="629.500" width="300" height="140" fill="#41413f" stroke="#000" stroke-width="1.300"/>
              <rect x="1549.500" y="635.500" width="300" height="127.500" fill="#a8b9af" stroke="#000" stroke-width="1.600"/>
              <path d="M1547.500 765v-132H1850" fill="none" stroke="#111"/>
              <g fill="#41413f" stroke="#000" stroke-width="1.300"><path d="M1501.500 642.500h400v9.500h-400zM1501.500 666h400v8h-400zM1501.500 690h400v8h-400zM1501.500 726h400v9.500h-400zM1501.500 750h400v8h-400zM1501.500 774h400v8h-400z"/></g>
              <path d="M1633 699.500h20" stroke="#000"/>
            </g>
            <path d="M169 349.500h1700M169 536.500h1700M169 629.500h1330M169 723.500h1700M169 816.500h1700M169 909.500h1700" fill="none" stroke="#7f7f7f" stroke-width="1.200" stroke-dasharray="112 56 56 56"/>
            <path d="M385 719.500l-10 3.500 10 3.500M929 719.500l10 3.500-10 3.500M1113 719.500l-10 3.500 10 3.500M393 723h12M1120 723h12" fill="none" stroke="#9a978f"/>
            <use href="#axis"/><use href="#axis" x="728"/>
          </svg>
          <div class="navbar">
            <span class="nx">×</span>
            <svg class="wheel" viewBox="0 0 24 24"><path d="M8 1h12v12q0 8-8 8-11 0-11-10T8 1z" fill="#a9bac6"/><circle cx="11" cy="11" r="6" fill="none" stroke="#5f7f99" stroke-width="1.500"/><circle cx="11" cy="11" r="3" fill="#cfdae2" stroke="#5f7f99"/></svg>
            <svg class="nc"><use href="#caret"/></svg>
            <i></i>
            <svg viewBox="0 0 24 24"><path d="M4 4h13v13H4z" fill="#73a874" stroke="#4b8a5c"/><circle cx="17" cy="17" r="4" fill="#d8dee2" stroke="#67849a"/></svg>
            <svg class="nc"><use href="#caret"/></svg>
            <span class="nx">⊜</span>
            <span class="mode">2D</span>
          </div>
        </div>
        <div class="vscroll"><i></i></div>
      </div>
      <div class="viewbar">
        <span class="scale">1 : 100</span>
        <button aria-label="详细程度"><svg><use href="#v1"/></svg></button><button aria-label="视觉样式"><svg><use href="#v2"/></svg></button><button aria-label="日光路径"><svg><use href="#v3"/></svg></button><button aria-label="阴影"><svg><use href="#v4"/></svg></button><button aria-label="裁剪视图"><svg><use href="#v5"/></svg></button><button aria-label="显示裁剪"><svg><use href="#v6"/></svg></button><button aria-label="临时隐藏"><svg><use href="#v7"/></svg></button><button aria-label="显示隐藏"><svg><use href="#v8"/></svg></button><button aria-label="临时视图属性"><svg><use href="#v9"/></svg></button><button aria-label="分析模型"><svg><use href="#v10"/></svg></button><button aria-label="约束"><svg><use href="#v11"/></svg></button>
        <div class="hscroll"><i></i></div>
        <span class="grip"></span>
      </div>
    </section>

    <aside class="browser">
      <h2>项目浏览器 - 建筑信息模型-13420160229</h2>
      <ul class="tree">
        <li><div class="row"><button class="tg" aria-label="折叠">−</button><b></b><svg><use href="#vroot"/></svg><span>视图 (全部)</span></div>
          <ul>
            <li><div class="row"><button class="tg" aria-label="折叠">−</button><b></b><span>楼层平面</span></div>
              <ul class="leaf"><li>-2.15</li><li>-4.25</li><li>-5.7</li><li>-6.5</li><li>0</li><li><mark>1</mark></li><li>2</li><li>3</li><li>4</li><li>6</li><li>7.5</li><li>10</li><li>11</li><li>11.5</li><li>13</li><li>19</li><li>23.1</li><li>场地</li><li>室外地坪</li></ul></li>
            <li><div class="row"><button class="tg" aria-label="展开">+</button><b></b><span>天花板平面</span></div></li>
            <li><div class="row"><button class="tg" aria-label="折叠">−</button><b></b><span>三维视图</span></div>
              <ul class="leaf"><li>{3D}</li><li>{三维}</li></ul></li>
            <li><div class="row"><button class="tg" aria-label="折叠">−</button><b></b><span>立面 (建筑立面)</span></div>
              <ul class="leaf"><li><strong>东1</strong></li><li>北1</li><li>南1</li><li>西1</li></ul></li>
            <li><div class="row"><button class="tg" aria-label="展开">+</button><b></b><span>面积平面 (人防分区面积)</span></div></li>
            <li><div class="row"><button class="tg" aria-label="展开">+</button><b></b><span>面积平面 (净面积)</span></div></li>
            <li><div class="row"><button class="tg" aria-label="展开">+</button><b></b><span>面积平面 (总建筑面积)</span></div></li>
          </ul>
        </li>
      </ul>
      <div class="bscroll"><i></i></div>
    </aside>
  </main>

  <footer class="status">
    <div class="sets">
      <svg><use href="#s1"/></svg>
      <label class="combo"><select aria-label="工作集"><option></option></select><svg><use href="#chev"/></svg></label>
      <svg><use href="#s2"/></svg><span class="cnt">:0</span>
      <svg><use href="#s3"/></svg><svg><use href="#s4"/></svg>
      <label class="combo"><select aria-label="设计选项"><option>主模型</option></select><svg><use href="#chev"/></svg></label>
    </div>
    <div class="sel">
      <button aria-label="选择链接"><svg><use href="#q1"/></svg></button><button aria-label="选择基线图元"><svg><use href="#q2"/></svg></button><button aria-label="选择锁定图元"><svg><use href="#q3"/></svg></button><button aria-label="按面选择"><svg><use href="#q4"/></svg></button><button aria-label="选择时拖曳"><svg><use href="#q5"/></svg></button><button aria-label="后台进程"><svg><use href="#q6"/></svg></button><button aria-label="过滤器"><svg><use href="#q7"/></svg></button><span>:0</span>
    </div>
  </footer>
  <div class="taskbar"><i></i></div>

  <div class="float">
    <div class="fbody">
      <div class="fbtns">
        <button class="on"><svg><use href="#g-del"/></svg>添加</button>
        <button><svg><use href="#g-del"/></svg>删除</button>
        <button><svg><use href="#clip"/></svg>附着</button>
        <i></i>
        <button><svg class="m"><use href="#ok"/></svg>完成</button>
        <button><svg class="m"><use href="#no"/></svg>取消</button>
      </div>
      <div class="flabel">编辑组</div>
    </div>
    <div class="fgrip"><svg><use href="#menu-caret"/></svg></div>
  </div>
  <svg class="pointer" viewBox="0 0 16 22"><path d="M2 1v17l4-4 3 7 3-1-3-7h6z" fill="#fff" stroke="#222" stroke-width="1.200"/></svg>
</div>
</body>
</html>
```
FILE: styles.css
```css
* { box-sizing: border-box; }
body {
  margin: 0;
  font: 15px/20px "Open Sans", "Noto Sans CJK SC", sans-serif;
  color: #333;
  background: #ededed;
}
button { font: inherit; color: inherit; background: none; border: 0; padding: 0; }
a { color: inherit; text-decoration: none; }
ul { list-style: none; margin: 0; padding: 0; }
svg { display: block; flex: none; }
.sprite { position: absolute; width: 0; height: 0; }
.app {
  position: relative;
  display: flex;
  flex-direction: column;
  height: 100vh;
  overflow: hidden;
}

/* title bar */
.titlebar { display: flex; height: 37px; flex: none; background: #cbcbcb; white-space: nowrap; }
.qat { display: flex; align-items: center; height: 32px; margin-left: -3px; }
.tb { width: 30px; height: 28px; display: flex; align-items: center; justify-content: center; flex: none; }
.tb svg, .login svg { width: 22px; height: 22px; }
.tb.on { background: #a9d3f5; border: 2px solid #2872b8; }
.tb.letter { font-weight: 700; font-size: 22px; color: #8b8b8b; }
.tc { width: 15px; height: 28px; display: flex; align-items: center; justify-content: center; flex: none; }
.tc svg { width: 9px; height: 9px; }
.tc.wide { width: 20px; }
.tc .mc, .infocenter > .mc { width: 10px; height: 12px; }
.tsep { width: 1px; height: 28px; margin: 0 4px; background: #b9b9b9; flex: none; }
.title { flex: 1; margin: 0; font-size: 16px; line-height: 22px; font-weight: 400; text-align: center; }
.infocenter { display: flex; align-items: center; height: 32px; width: 630px; flex: none; }
.infocenter > .mc { margin-right: 5px; }
.search { width: 225px; height: 28px; border: 1px solid #111; background: #fff; font: italic 14px "Open Sans", "Noto Sans CJK SC", sans-serif; padding: 0 4px; flex: none; }
.search::placeholder { color: #777; }
.login { display: flex; align-items: center; gap: 6px; width: 132px; padding-left: 6px; flex: none; }
.infocenter .tb { width: 29px; }
.infocenter .cart { width: 34px; }
.infocenter .help { width: 34px; }
.help span { width: 21px; height: 22px; border: 2px solid #4e5666; border-radius: 50%; background: #f2f5fa; color: #2b62b4; font-weight: 700; line-height: 18px; }
.infocenter .min { width: 46px; padding-left: 6px; }
.min i { width: 10px; height: 3px; background: #333; margin-top: 12px; }

/* ribbon tabs */
.tabs { display: flex; height: 25px; flex: none; background: #cbcbcb; padding-left: 0; white-space: nowrap; }
.tabs a { padding: 0 12px; line-height: 25px; }
.tabs .file { background: #2476b8; color: #fff; margin: 0 3px 0 -36px; }
.tabs .active { background: #ededed; }

/* ribbon */
.ribbon { display: flex; height: 121px; flex: none; overflow: hidden; border-bottom: 1px solid #c8c8c8; }
.panel { display: flex; flex-direction: column; border-right: 1px solid #dcdcdc; flex: none; height: 119px; }
.panel:last-child { border: 0; }
.label { text-align: center; margin-top: auto; height: 22px; }
.body { display: flex; }
.p-select { width: 24px; }
.modify-btn { width: 48px; height: 112px; margin: 4px 0 0 -32px; background: #bcdcf6; border: 2px solid #5698d3; border-left: 0; padding-top: 4px; flex: none; }
.p-props { width: 56px; padding: 4px 0 0 2px; }
.lb { width: 48px; height: 44px; display: flex; justify-content: center; align-items: center; flex: none; }
.lb svg { width: 42px; height: 42px; }
.lb.on { background: #b5d8f4; border: 2px solid #5698d3; height: 60px; align-items: flex-start; }
.p-clip { width: 95px; }
.paste { width: 60px; padding-top: 4px; display: flex; flex-direction: column; align-items: center; color: #aaa; }
.paste .l { width: 40px; height: 40px; margin-bottom: 7px; }
.c { width: 9px; height: 9px; justify-self: center; align-self: center; }
.paste .c { margin-top: 1px; }
.grid { display: grid; grid-auto-rows: 31px; padding-top: 2px; align-items: center; }
.grid button { display: flex; align-items: center; justify-content: center; }
.grid button svg:not(.c) { width: 21px; height: 21px; }
.g1 { grid-template-columns: 31px; }
.p-geo { width: 213px; }
.gt { width: 131px; padding-left: 6px; justify-items: start; }
.grid.gt button { gap: 5px; }
.gt .c { margin-left: 6px; }
.g2c { grid-template-columns: 31px 31px 16px; }
.p-mod { width: 299px; }
.p-mod .body { gap: 4px; padding-left: 1px; }
.g3 { grid-template-columns: 31px 31px 31px; }
.big { display: grid; grid-auto-rows: 44px; padding-top: 4px; align-items: center; justify-items: center; }
.big button svg { width: 38px; height: 38px; }
.b4 { grid-template-columns: repeat(4, 49px); }
.p-view { width: 81px; }
.gv { grid-template-columns: 32px 14px 32px; }
.p-meas { width: 70px; }
.bm { grid-template-columns: 50px 16px; }
.p-new { width: 102px; }
.b2 { grid-template-columns: 50px 46px; }
.options { height: 33px; flex: none; }

/* main area */
.main { flex: 1; display: flex; min-height: 0; }
.properties { width: 238px; flex: none; border-right: 1px solid #c4c4c4; padding-right: 4px; display: flex; }
.inner { flex: 1; margin-left: -30px; padding-top: 45px; display: flex; flex-direction: column; white-space: nowrap; }
.type { height: 71px; display: flex; border: 1px solid #c9c9c9; border-left: 0; flex: none; }
.preview { width: 79px; height: 67px; border: 1px solid #c9c9c9; border-top: 0; }
.tname { flex: 1; padding: 5px 0 0 6px; line-height: 19px; }
.type svg { width: 13px; height: 12px; margin-top: 20px; }
.filter { display: flex; height: 29px; align-items: center; margin-left: -11px; }
.combo { display: grid; align-items: center; }
.combo > * { grid-area: 1 / 1; }
.combo svg { width: 10px; height: 7px; justify-self: end; margin-right: 5px; }
.combo select { appearance: none; width: 100%; border: 1px solid #d0d0d0; background: #fff; font: inherit; color: inherit; border-radius: 0; padding: 0; }
.filter .combo { width: 178px; }
.filter select { height: 27px; color: #111; }
.edit-type { display: flex; gap: 4px; align-items: center; margin-left: 6px; color: #111; }
.edit-type svg { width: 18px; height: 18px; }
.cat { height: 24px; flex: none; background: #dadada; display: flex; justify-content: flex-end; padding: 4px 4px 0 0; }
.cat svg { width: 10px; height: 10px; }
.ptable { border-collapse: collapse; table-layout: fixed; width: 100%; background: #fff; color: #777; line-height: 19px; }
.ptable th, .ptable td { border: 1px dotted #999; border-left: 0; height: 24px; padding: 0 3px 3px; text-align: left; font-weight: 400; }
.ptable tr:first-child > * { border-top: 0; }
.ptable th { width: 121px; }
.ptable td:last-child { width: 15px; }
.blank { flex: 1; background: #fff; }
.pfoot { height: 33px; display: flex; align-items: center; justify-content: space-between; padding: 0 3px 5px 0; }
.pfoot a { color: #1a66b3; text-decoration: underline; margin-left: -5px; }
.pfoot button { width: 96px; height: 22px; background: #f8f8f8; border-radius: 3px; color: #888; }

.center { flex: 1; min-width: 0; display: flex; flex-direction: column; border-right: 2px solid #fff; }
.doctabs { display: flex; height: 29px; flex: none; background: #cbcbcb; padding-top: 2px; border-bottom: 2px solid #fff; }
.doctabs a { flex: 0 1 160px; display: flex; align-items: center; gap: 9px; padding: 0 6px 2px 7px; color: #444; white-space: nowrap; }
.doctabs a svg { width: 20px; height: 20px; color: #8a8c90; }
.doctabs .dim { opacity: .5; }
.doctabs .active { background: #fff; color: #222; font-weight: 500; }
.doctabs .active svg { color: #3a404b; }
.x { margin-left: auto; font-size: 18px; }
.more { margin-left: auto; }
.doctabs .more { padding-right: 6px; }
.doctabs .more svg { width: 11px; height: 12px; }
.stage { flex: 1; display: flex; min-height: 0; }
.canvas { flex: 1; position: relative; min-width: 0; margin-left: 2px; }
.drawing { width: 100%; height: 100%; }
.navbar { position: absolute; top: 2px; right: 2px; width: 32px; height: 114px; border-radius: 4px; background: rgba(190, 200, 205, .38); border-right: 3px solid rgba(225, 190, 120, .5); display: flex; flex-direction: column; align-items: center; color: #c5d0d8; }
.navbar svg { width: 22px; height: 22px; }
.navbar .wheel { margin-top: 6px; }
.navbar .nc { width: 7px; height: 7px; margin: 6px 0; opacity: .5; }
.navbar i { width: 26px; height: 1px; background: #47617a; margin-bottom: 6px; }
.nx { align-self: flex-end; font-size: 12px; line-height: 12px; }
.mode { position: absolute; right: 1px; top: 32px; font-size: 10px; line-height: 12px; font-weight: 700; color: #2a65a0; }
.vscroll { width: 23px; border-right: 1px solid #ccc; flex: none; }
.vscroll i { display: block; width: 6px; height: 21px; background: #858585; margin: 349px 0 0 8px; }
.viewbar { height: 24px; flex: none; display: flex; align-items: center; border-top: 1px solid #fff; border-bottom: 2px solid #fff; padding: 0 0 2px 29px; }
.scale { font: 14px/20px "Liberation Mono", monospace; width: 76px; color: #111; }
.viewbar button { width: 28px; display: flex; justify-content: center; flex: none; }
.viewbar button svg { width: 20px; height: 20px; }
.hscroll { flex: 1; padding-left: 485px; }
.hscroll i { display: block; width: 21px; height: 6px; background: #858585; }
.grip { width: 12px; height: 12px; margin-right: 4px; background: radial-gradient(circle, #b5b5b5 1px, transparent 2px) 0 0 / 4px 4px; clip-path: polygon(100% 0, 100% 100%, 0 100%); }

/* project browser */
.browser { width: 166px; flex: none; display: flex; flex-direction: column; overflow: hidden; border-left: 1px solid #ccc; background: #ededed; }
.browser h2 { margin: 2px 0 0; padding-left: 4px; height: 24px; font-size: 15px; line-height: 24px; font-weight: 400; white-space: nowrap; color: #444; flex: none; }
.tree { flex: 1; background: #fff; margin-left: 2px; padding-left: 5px; color: #111; white-space: nowrap; line-height: 22px; }
.tree li { position: relative; }
.tree .row { height: 22px; display: flex; align-items: center; }
.tree .row svg { width: 19px; height: 19px; margin-right: 5px; }
.tg { width: 13px; height: 13px; border: 1px solid #999; background: #f6f6f6; color: #2c4c9c; font-size: 13px; line-height: 10px; flex: none; z-index: 1; }
.row b { width: 10px; height: 1px; border-top: 1px dotted #aaa; flex: none; }
.tree ul { padding-left: 26px; }
.tree ul .row b { width: 14px; }
.tree li::before { content: ""; position: absolute; left: 6px; top: 0; bottom: 0; border-left: 1px dotted #aaa; }
.tree .leaf li { height: 22px; padding-left: 28px; }
.tree .leaf li::after { content: ""; position: absolute; left: 7px; top: 11px; width: 18px; border-top: 1px dotted #aaa; }
.tree .leaf li:last-child::before { bottom: 11px; }
.tree mark { display: inline-block; background: #e2e2e2; color: inherit; padding: 0 4px; margin-left: -4px; }
.bscroll { height: 24px; padding: 8px 0 0 23px; flex: none; }
.bscroll i { display: block; width: 123px; height: 6px; background: #858585; }

/* status bar */
.status { height: 33px; flex: none; background: #cbcbcb; border-bottom: 1px solid #a9a9a9; display: flex; justify-content: space-between; align-items: center; padding: 0 20px 0 718px; }
.sets, .sel { display: flex; align-items: center; }
.sets > svg { width: 23px; height: 23px; margin-right: 6px; }
.sets .combo { width: 254px; margin-right: 6px; }
.sets select { height: 22px; border: 0; color: #888; padding: 0 3px; }
.cnt { width: 33px; color: #111; }
.sets .cnt + svg { margin-right: 7px; }
.sel button { width: 30px; display: flex; justify-content: center; }
.sel button:last-of-type { width: 25px; }
.sel svg { width: 23px; height: 23px; }
.taskbar { height: 11px; flex: none; background: linear-gradient(90deg, #efdcd5, #edd9d2 28%, #f5e2d2 47%, #ead9d4 62%, #f2dcd5 70%, #eae7e4 80%, #ebe6e4); padding-top: 5px; }
.taskbar i { display: block; width: 48px; height: 6px; margin-left: 816px; border-radius: 4px 4px 0 0; background: #fbeee6; }

/* floating contextual panel */
.float { position: absolute; left: 0; top: 143px; height: 118px; display: flex; }
.fbody { width: 233px; background: #eee; border-top: 1px solid #ccc; border-bottom: 1px solid #ccc; overflow: hidden; }
.fbtns { display: flex; height: 95px; margin-left: -26px; padding-top: 2px; }
.fbtns button { width: 48px; height: 90px; display: flex; flex-direction: column; align-items: center; gap: 5px; padding-top: 4px; flex: none; }
.fbtns svg { width: 38px; height: 38px; }
.fbtns svg.m { width: 28px; height: 38px; }
.fbtns .on { background: #c5e4f9; border: 2px solid #2b72b5; padding-top: 2px; }
.fbtns i { width: 1px; margin: 0 6px 4px 8px; background: #ccc; }
.flabel { height: 20px; line-height: 20px; text-align: center; background: #fff5df; padding-right: 26px; }
.fgrip { width: 20px; background: rgba(150, 150, 150, .85); }
.fgrip svg { width: 10px; height: 10px; margin: 6px 0 0 4px; filter: invert(1); }
.pointer { position: absolute; left: 2px; top: 199px; width: 14px; height: 22px; }
```
